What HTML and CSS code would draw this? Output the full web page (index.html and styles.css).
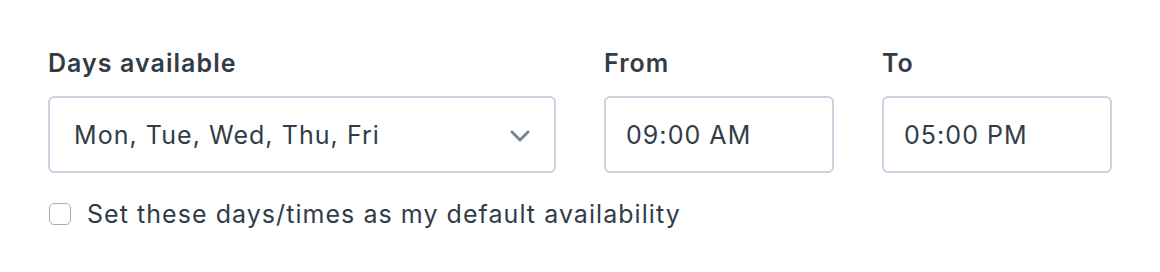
FILE: index.html
```html
<!DOCTYPE html>
<html lang="en">

<head>
    <meta charset="UTF-8">
    <meta name="viewport" content="width=device-width, initial-scale=1.0">
    <title>Availability</title>
    <link rel="stylesheet" href="styles.css">
</head>

<body>
    <div class="availability">
        <div class="row">
            <div class="field days">
                <label class="label">Days available</label>
                <div class="select">
                    <span class="value">Mon, Tue, Wed, Thu, Fri</span>
                    <svg class="chevron" width="20" height="12" viewBox="0 0 20 12">
                        <path d="M2 2 L10 10 L18 2" fill="none" stroke="#7b8693" stroke-width="3" stroke-linecap="round" stroke-linejoin="round"/>
                    </svg>
                </div>
            </div>
            <div class="field time">
                <label class="label">From</label>
                <div class="select">
                    <span class="value">09:00 AM</span>
                </div>
            </div>
            <div class="field time">
                <label class="label">To</label>
                <div class="select">
                    <span class="value">05:00 PM</span>
                </div>
            </div>
        </div>
        <label class="check">
            <span class="box"></span>
            <span class="check-text">Set these days/times as my default availability</span>
        </label>
    </div>
</body>

</html>
```

FILE: styles.css
```css
body {
    margin: 0;
    padding: 0;
    background-color: #fff;
    font-family: "Inter", "Liberation Sans", sans-serif;
    color: #323c47;
    letter-spacing: 1.05px;
}

.availability {
    padding: 47px 48px 0 48px;
}

.row {
    display: flex;
    gap: 48px;
}

.field {
    display: flex;
    flex-direction: column;
}

.days {
    width: 508px;
}

.time {
    width: 230px;
}

.label {
    font-size: 25px;
    font-weight: 600;
    line-height: 32px;
    margin-bottom: 17px;
}

.select {
    height: 77px;
    box-sizing: border-box;
    border: 2px solid #c8d2de;
    border-radius: 6px;
    display: flex;
    align-items: center;
    justify-content: space-between;
    padding: 0 24px 0 24px;
}

.time .select {
    padding-left: 20px;
}

.value {
    font-size: 25px;
}

.chevron {
    margin-top: 2px;
}

.check {
    display: flex;
    align-items: center;
    gap: 16px;
    margin-top: 26px;
    font-size: 25px;
}

.box {
    width: 22px;
    height: 22px;
    box-sizing: border-box;
    border: 1.5px solid #a9abae;
    border-radius: 5px;
    margin-left: 1px;
}
```
